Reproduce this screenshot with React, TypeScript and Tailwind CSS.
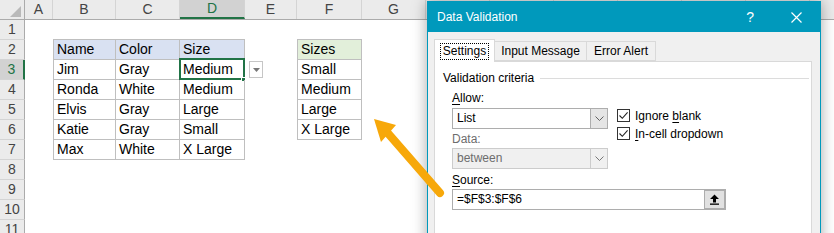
import React from "react";

const cols = [
  { l: "A", w: 28 },
  { l: "B", w: 63 },
  { l: "C", w: 64 },
  { l: "D", w: 65 },
  { l: "E", w: 52 },
  { l: "F", w: 65 },
  { l: "G", w: 64 },
  { l: "H", w: 64 },
  { l: "I", w: 64 },
  { l: "J", w: 64 },
  { l: "K", w: 64 },
  { l: "L", w: 64 },
  { l: "M", w: 64 },
];

const data: Record<number, Record<string, string>> = {
  2: { B: "Name", C: "Color", D: "Size", F: "Sizes" },
  3: { B: "Jim", C: "Gray", D: "Medium", F: "Small" },
  4: { B: "Ronda", C: "White", D: "Medium", F: "Medium" },
  5: { B: "Elvis", C: "Gray", D: "Large", F: "Large" },
  6: { B: "Katie", C: "Gray", D: "Small", F: "X Large" },
  7: { B: "Max", C: "White", D: "X Large" },
};

const inTable = (r: number, c: string) =>
  (r >= 2 && r <= 7 && ["B", "C", "D"].includes(c)) || (r >= 2 && r <= 6 && c === "F");

function Cell({ r, c, w }: { r: number; c: string; w: number }) {
  const t = inTable(r, c);
  let cls = "relative shrink-0 h-[20px] pl-[3px] leading-[19px] text-[14px] text-black whitespace-nowrap";
  if (t) {
    cls += " border-r border-b border-[#bfbfbf]";
    if (c === "B" || c === "F") cls += " border-l";
    if (r === 2) cls += " border-t -mt-px h-[21px]";
  }
  if (r === 2 && ["B", "C", "D"].includes(c)) cls += " bg-[#d9e1f2]";
  if (r === 2 && c === "F") cls += " bg-[#e2efda]";
  const active = r === 3 && c === "D";
  return (
    <div className={cls} style={{ width: w }}>
      {data[r]?.[c]}
      {active && (
        <>
          <div className="absolute -left-px -top-[2px] w-[66px] h-[22px] border-2 border-[#217346]" />
          <div className="absolute left-[61px] top-[17px] w-[5px] h-[5px] bg-[#217346] border border-white" />
          <div className="absolute left-[69px] top-[1px] w-[14px] h-[17px] bg-white border border-[#c6c6c6] flex items-center justify-center">
            <svg width="7" height="4" viewBox="0 0 7 4">
              <path d="M0 0 H7 L3.5 4 Z" fill="#777" />
            </svg>
          </div>
        </>
      )}
    </div>
  );
}

function Sheet() {
  const rowNums = [1, 2, 3, 4, 5, 6, 7, 8, 9, 10, 11];
  return (
    <div className="flex flex-col font-['Liberation_Sans',Arial,sans-serif] bg-white">
      <div className="flex h-[20px] bg-[#ebebeb] border-b border-[#ababab]">
        <div className="relative shrink-0 w-[25px] border-r border-[#ababab]">
          <svg className="absolute right-[3px] bottom-[2px]" width="11" height="11" viewBox="0 0 11 11">
            <path d="M11 0 V11 H0 Z" fill="#b9b9b9" />
          </svg>
        </div>
        {cols.map((c) => (
          <div
            key={c.l}
            className={
              "shrink-0 flex items-center justify-center text-[14px] text-[#444] border-r border-[#d4d4d4] " +
              (c.l === "D" ? "bg-[#d2d2d2] border-b-2 border-b-[#217346] text-[#217346]" : "")
            }
            style={{ width: c.w }}
          >
            {c.l}
          </div>
        ))}
      </div>
      {rowNums.map((r) => (
        <div key={r} className="flex h-[20px]">
          <div
            className={
              "shrink-0 w-[25px] h-[20px] flex items-center justify-center text-[14px] text-[#444] border-b border-[#d4d4d4] " +
              (r === 3
                ? "bg-[#d2d2d2] border-r-2 border-r-[#217346] text-[#217346]"
                : "bg-[#ebebeb] border-r border-r-[#ababab]")
            }
          >
            {r}
          </div>
          {cols.map((c) => (
            <Cell key={c.l} r={r} c={c.l} w={c.w} />
          ))}
        </div>
      ))}
    </div>
  );
}

function Chevron({ color = "#606060" }: { color?: string }) {
  return (
    <svg width="9" height="5" viewBox="0 0 9 5">
      <path d="M0.5 0.5 L4.5 4.5 L8.5 0.5" fill="none" stroke={color} strokeWidth="1" />
    </svg>
  );
}

function Check({ label, u, rest }: { label?: string; u: string; rest: string }) {
  return (
    <div className="flex items-center h-[13px]">
      <div className="w-[13px] h-[13px] border border-[#333] bg-white flex items-center justify-center">
        <svg width="11" height="11" viewBox="0 0 11 11">
          <path d="M1.5 5.5 L4.3 8.3 L9.6 2.4" fill="none" stroke="#222" strokeWidth="1.1" />
        </svg>
      </div>
      <span className="ml-[5px] text-black">
        {label}
        <span className="underline underline-offset-2">{u}</span>
        {rest}
      </span>
    </div>
  );
}

function Dialog() {
  return (
    <div className="absolute left-[427px] top-[1px] w-[394px] h-[250px] border border-[#0099bc] bg-[#f0f0f0] shadow-[0_0_14px_rgba(0,0,0,0.35)] font-['Liberation_Sans',Arial,sans-serif] text-[12px]">
      <div className="h-[30px] bg-[#0099bc] flex items-center pl-[9px] text-white text-[12px]">
        <span>Data Validation</span>
        <span className="ml-auto text-[14px] mr-[37px]">?</span>
        <svg className="mr-[18px]" width="11" height="11" viewBox="0 0 11 11">
          <path d="M0.5 0.5 L10.5 10.5 M10.5 0.5 L0.5 10.5" stroke="white" strokeWidth="1.2" />
        </svg>
      </div>
      <div className="pt-[7px] pl-[6px] pr-[8px]">
        <div className="flex items-end h-[22px] relative z-10">
          <div className="w-[61px] h-[23px] bg-white border border-b-0 border-[#d9d9d9] flex items-center justify-center -mb-px">
            <span className="border border-dotted border-black px-[2px] leading-[15px]">Settings</span>
          </div>
          <div className="w-[92px] h-[20px] border border-l-0 border-[#d9d9d9] flex items-center justify-center">
            Input Message
          </div>
          <div className="w-[69px] h-[20px] border border-l-0 border-[#d9d9d9] flex items-center justify-center">
            Error Alert
          </div>
        </div>
        <div className="bg-white border border-[#d9d9d9] h-[200px] pl-[8px] pt-[8px]">
          <div className="flex items-center h-[16px] pr-[2px]">
            <span>Validation criteria</span>
            <div className="flex-1 h-px bg-[#dcdcdc] ml-[6px]" />
          </div>
          <div className="pl-[9px]">
            <div className="mt-[4px] h-[16px] leading-[16px]">
              <span className="underline underline-offset-2">A</span>llow:
            </div>
            <div className="flex mt-[2px]">
              <div className="w-[156px]">
                <div className="h-[21px] border border-[#adadad] bg-white flex">
                  <span className="flex-1 pl-[4px] leading-[19px]">List</span>
                  <div className="w-[17px] border-l border-[#adadad] bg-[#e5e5e5] flex items-center justify-center">
                    <Chevron />
                  </div>
                </div>
                <div className="mt-[2px] h-[16px] leading-[16px] text-[#6d6d6d]">Data:</div>
                <div className="mt-[1px] h-[21px] border border-[#cccccc] bg-[#f0f0f0] flex">
                  <span className="flex-1 pl-[4px] leading-[19px] text-[#6d6d6d]">between</span>
                  <div className="w-[17px] border-l border-[#cccccc] flex items-center justify-center">
                    <Chevron color="#777" />
                  </div>
                </div>
              </div>
              <div className="ml-[9px] pt-[1px] flex flex-col gap-[5px]">
                <Check label="Ignore " u="b" rest="lank" />
                <Check u="I" rest="n-cell dropdown" />
              </div>
            </div>
            <div className="mt-[3px] h-[16px] leading-[16px]">
              <span className="underline underline-offset-2">S</span>ource:
            </div>
            <div className="mt-px w-[274px] h-[21px] border border-[#adadad] bg-white flex">
              <span className="flex-1 pl-[4px] leading-[19px]">=$F$3:$F$6</span>
              <div className="w-[21px] bg-[#e1e1e1] border border-[#adadad] flex items-center justify-center">
                <svg width="11" height="11" viewBox="0 0 11 11">
                  <path d="M5.5 0.5 L10 5 H7 V8.5 H4 V5 H1 Z" fill="#000" />
                  <rect x="1" y="9.5" width="9" height="1.3" fill="#000" />
                </svg>
              </div>
            </div>
          </div>
        </div>
      </div>
    </div>
  );
}

function Arrow() {
  return (
    <svg className="absolute left-0 top-0 pointer-events-none" width="834" height="233" viewBox="0 0 834 233">
      <line x1="386" y1="131" x2="440" y2="193" stroke="#f7a80a" strokeWidth="8" strokeLinecap="round" />
      <path d="M374 119 L396 125 L381 142 Z" fill="#f7a80a" />
    </svg>
  );
}

export default function App() {
  return (
    <div className="relative w-[834px] h-[233px] overflow-hidden bg-white">
      <Sheet />
      <Dialog />
      <Arrow />
    </div>
  );
}
